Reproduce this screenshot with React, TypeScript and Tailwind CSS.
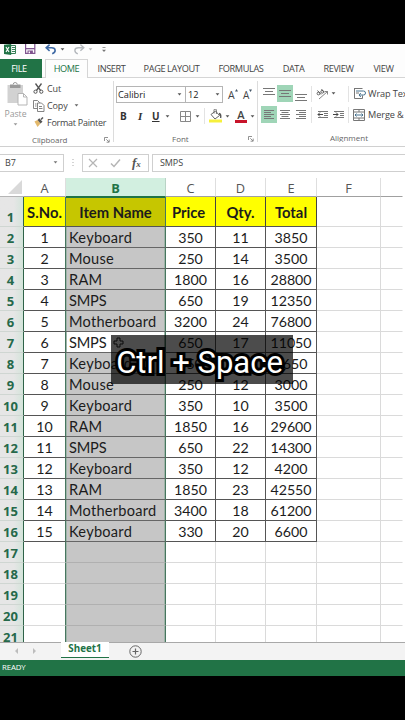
import React from "react";
import clsx from "clsx";

interface Item {
    no: number;
    name: string;
    price: number;
    qty: number;
    total: number;
}

const items: Item[] = [
    { no: 1, name: "Keyboard", price: 350, qty: 11, total: 3850 },
    { no: 2, name: "Mouse", price: 250, qty: 14, total: 3500 },
    { no: 3, name: "RAM", price: 1800, qty: 16, total: 28800 },
    { no: 4, name: "SMPS", price: 650, qty: 19, total: 12350 },
    { no: 5, name: "Motherboard", price: 3200, qty: 24, total: 76800 },
    { no: 6, name: "SMPS", price: 650, qty: 17, total: 11050 },
    { no: 7, name: "Keyboard", price: 350, qty: 13, total: 4650 },
    { no: 8, name: "Mouse", price: 250, qty: 12, total: 3000 },
    { no: 9, name: "Keyboard", price: 350, qty: 10, total: 3500 },
    { no: 10, name: "RAM", price: 1850, qty: 16, total: 29600 },
    { no: 11, name: "SMPS", price: 650, qty: 22, total: 14300 },
    { no: 12, name: "Keyboard", price: 350, qty: 12, total: 4200 },
    { no: 13, name: "RAM", price: 1850, qty: 23, total: 42550 },
    { no: 14, name: "Motherboard", price: 3400, qty: 18, total: 61200 },
    { no: 15, name: "Keyboard", price: 330, qty: 20, total: 6600 },
];

const tabs = [
    { label: "INSERT", className: "w-[47px]" },
    { label: "PAGE LAYOUT", className: "w-[73px]" },
    { label: "FORMULAS", className: "w-[66px]" },
    { label: "DATA", className: "w-[39px]" },
    { label: "REVIEW", className: "w-[51px]" },
    { label: "VIEW", className: "w-[39px]" },
];

const gridCols = "grid grid-cols-[24px_42px_100px_50px_50px_51px_64px_22px] grid-rows-[100%]";

const Caret = ({ className }: { className?: string }) => (
    <svg width="5" height="3" viewBox="0 0 5 3" className={clsx("shrink-0", className)}>
        <path d="M0.6 0.3h3.8L2.5 2.5z" fill="currentColor" />
    </svg>
);

const Launcher = () => (
    <svg width="6" height="6" viewBox="0 0 6 6" fill="none" stroke="#777" strokeWidth="0.8">
        <path d="M0.5 4V0.5H4M2.3 2.3l2.6 2.6M5.2 2.6v2.6H2.6" />
    </svg>
);

// kind decides which side the short lines stick to
const Lines = ({ kind }: { kind: "left" | "center" | "right" }) => {
    const x = kind === "left" ? 0 : kind === "center" ? 1.5 : 3;
    return (
        <svg width="10" height="9" viewBox="0 0 10 9" stroke="#777" strokeWidth="1">
            <path d={`M0 0.5h10M${x} 2.5h7M0 4.5h10M${x} 6.5h7M0 8.5h10`} />
        </svg>
    );
};

const VLines = () => (
    <svg width="12" height="7" viewBox="0 0 12 7" stroke="#777" strokeWidth="1">
        <path d="M0 0.5h12M2 3.5h8M0 6.5h12" />
    </svg>
);

const Indent = ({ flip }: { flip?: boolean }) => (
    <svg width="12" height="9" viewBox="0 0 12 9" fill="none" stroke="#777" strokeWidth="1">
        <path d="M1 1.5h10M7 3.5h4M7 5.5h4M1 7.5h10" />
        <path d={flip ? "M0 4.5h5M3 2.5l2 2l-2 2" : "M1 4.5h5M3 2.5l-2 2l2 2"} stroke="#444" />
    </svg>
);

const QuickAccess = () => (
    <div className="flex h-[15px] items-start bg-[#fdfdfd]">
        <svg width="12" height="11" viewBox="0 0 12 11" className="ml-1">
            <path d="M7 1.5h4.5v8H7" fill="#fff" stroke="#217346" strokeWidth="0.9" />
            <path d="M8 3.5h3M8 5.5h3M8 7.5h3" stroke="#217346" strokeWidth="0.9" />
            <path d="M0 0.8L7.2 0v11L0 10z" fill="#217346" />
            <path d="M2 3l3 5M5 3L2 8" stroke="#fff" strokeWidth="1.1" />
        </svg>
        <svg width="11" height="10" viewBox="0 0 11 10" className="ml-[9px]">
            <path d="M0.6 0v9.3h9.2V0" fill="#fff" stroke="#80548f" strokeWidth="1.2" />
            <path d="M0.6 4h9.2v1.3H0.6z" fill="#80548f" />
            <path d="M2.5 6.5h5.4v3H2.5z" fill="#80548f" />
            <path d="M3.6 7.6h1.4v1.6H3.6z" fill="#fff" />
        </svg>
        <svg width="12" height="11" viewBox="0 0 12 11" fill="none" stroke="#3f6aa5" strokeWidth="1.6" className="ml-[9px]">
            <path d="M4.6 0.6L1.2 3.8l3.4 3M1.4 3.8h5.2c4.6 0 4.6 4.4 0.6 6" />
        </svg>
        <Caret className="ml-[3px] mt-1 text-[#555]" />
        <svg width="12" height="11" viewBox="0 0 12 11" fill="none" stroke="#b4b8bd" strokeWidth="1.4" className="ml-2">
            <path d="M7.4 0.6l3.4 3.2l-3.4 3M10.6 3.8H5.4c-4.6 0-4.6 4.4-0.6 6" />
        </svg>
        <Caret className="ml-[3px] mt-1 text-[#bbb]" />
        <svg width="6" height="6" viewBox="0 0 6 6" className="ml-[8px] mt-[3px]">
            <path d="M1.5 0.5h3" stroke="#999" />
            <path d="M1 2.7h4L3 4.9z" fill="#777" />
        </svg>
    </div>
);

const TabBar = () => (
    <div className="flex h-[19px] bg-[#fdfdfd] text-[9.2px] leading-[19px] tracking-[-0.4px] text-[#444]">
        <div className="flex w-[42px] justify-center bg-[#217346] pr-1 text-white">FILE</div>
        <div className="w-[3px] border-b border-[#d5d5d5]" />
        <div className="flex w-[43px] justify-center border-x border-t border-[#d5d5d5] leading-[18px] text-[#217346]">
            HOME
        </div>
        <div className="flex flex-1 overflow-hidden border-b border-[#d5d5d5]">
            {tabs.map((tab) => (
                <div key={tab.label} className={clsx("flex shrink-0 justify-center whitespace-nowrap", tab.className)}>
                    {tab.label}
                </div>
            ))}
        </div>
    </div>
);

const ClipboardGroup = () => (
    <div className="flex w-[114px] flex-col border-r border-[#dcdcdc]">
        <div className="flex h-[50px]">
            <div className="flex w-[31px] flex-col items-center text-[#999]">
                <svg width="24" height="25" viewBox="0 0 24 25" className="ml-[5px] shrink-0">
                    <path d="M1.5 4h15.5v18H1.5z" fill="#d2d2d2" />
                    <path d="M4 3.5h10.5v3.5H4z" fill="#999" />
                    <path d="M7.2 3.5a2 2 0 0 1 4 0" fill="#fff" stroke="#999" />
                    <path d="M12 12.5h5.5l3.5 3.5v8H12z" fill="#fff" stroke="#b5b5b5" />
                    <path d="M17.5 12.5V16H21" fill="none" stroke="#b5b5b5" />
                </svg>
                <span className="mt-[2px] text-[8.7px] leading-[12px]">Paste</span>
                <Caret className="mt-[3px]" />
            </div>
            <div className="flex flex-col pl-0.5 text-[9px] tracking-[-0.15px] text-[#444]">
                <div className="-mt-px flex h-[18px] items-center">
                    <svg width="11" height="11" viewBox="0 0 11 11" fill="none" stroke="#555" strokeWidth="1">
                        <path d="M2.5 0.5l5 7M8.5 0.5l-5 7" strokeWidth="1.3" />
                        <circle cx="2.5" cy="8.7" r="1.6" />
                        <circle cx="8.3" cy="8.7" r="1.6" />
                    </svg>
                    <span className="ml-[3px]">Cut</span>
                </div>
                <div className="flex h-[18px] items-center">
                    <svg width="12" height="12" viewBox="0 0 12 12" fill="#fff" stroke="#777" strokeWidth="0.9">
                        <path d="M0.5 0.5h4l2 2v6h-6z" />
                        <path d="M4.5 3h4l2.5 2.5v6H4.5z" />
                        <path d="M6 6.5h3M6 8.5h3.5M2 4h1.5M2 6h1.5" />
                    </svg>
                    <span className="ml-0.5">Copy</span>
                    <Caret className="ml-[6px] text-[#666]" />
                </div>
                <div className="flex h-[17px] items-center whitespace-nowrap">
                    <svg width="11" height="11" viewBox="0 0 11 11">
                        <path d="M1.5 4.5l3-1.5l3 3.5l-3 3.5z" fill="#e3b96c" />
                        <path d="M4.5 3l1.8-1.8l3.2 3.6L7.5 6.5z" fill="#555" />
                        <path d="M8 2.5l2-2" stroke="#555" strokeWidth="1.5" />
                    </svg>
                    <span className="ml-[3px] tracking-[-0.25px]">Format Painter</span>
                </div>
            </div>
        </div>
        <div className="mt-[3px] flex h-[13px] items-center justify-between pl-8 pr-[3px] text-[8px] tracking-[-0.1px] text-[#666]">
            <span>Clipboard</span>
            <Launcher />
        </div>
    </div>
);

const FontGroup = () => (
    <div className="flex w-[144px] flex-col border-r border-[#dcdcdc] pl-0.5">
        <div className="mt-[5px] flex h-[17px] items-center text-[9.2px] text-[#222] [&>*]:shrink-0">
            <div className="flex h-[17px] w-[70px] items-center justify-between border border-[#b5b5b5] pl-px pr-[3px]">
                <span>Calibri</span>
                <Caret className="text-[#555]" />
            </div>
            <div className="flex h-[17px] w-[37px] items-center justify-between border border-l-0 border-[#b5b5b5] pl-0.5 pr-[2px]">
                <span>12</span>
                <Caret className="text-[#555]" />
            </div>
            <div className="ml-[5px] flex w-[15px] items-start text-[10.5px] leading-[14px] text-[#444]">
                A
                <svg width="3" height="3" viewBox="0 0 3 3" className="mt-px shrink-0"><path d="M0 2.5L1.5 0L3 2.5z" fill="#456" /></svg>
            </div>
            <div className="flex items-start text-[10px] leading-[14px] text-[#444]">
                A
                <svg width="3" height="3" viewBox="0 0 3 3" className="mt-px shrink-0"><path d="M0 0.5h3L1.5 3z" fill="#456" /></svg>
            </div>
        </div>
        <div className="mt-[5px] flex h-[19px] items-center text-[10px] text-[#333] [&>*]:shrink-0">
            <span className="ml-1 w-[18px] font-bold">B</span>
            <span className="w-[14px] font-['Liberation_Serif',serif] text-[11px] font-bold italic">I</span>
            <span className="w-[13px] font-bold underline">U</span>
            <Caret className="text-[#555]" />
            <svg width="11" height="11" viewBox="0 0 11 11" fill="none" stroke="#888" className="ml-[10px]">
                <path d="M0.5 0.5h10v10H0.5zM5.5 0.5v10M0.5 5.5h10" />
            </svg>
            <Caret className="ml-[4px] text-[#555]" />
            <div className="ml-1 h-4 w-px bg-[#e3e3e3]" />
            <svg width="15" height="14" viewBox="0 0 15 14" className="ml-[3px]">
                <path d="M1 10.5h13v3H1z" fill="#f6f03c" />
                <path d="M3 5.5l4.5-3.5l4 4.5l-4.5 3.5z" fill="#fff" stroke="#666" />
                <path d="M6 4.5V1.2a1.2 1.2 0 0 1 2.4 0V5" fill="none" stroke="#666" strokeWidth="0.9" />
                <path d="M11 4.5c2 0.5 2 2.5 1.6 4.5" fill="none" stroke="#555" strokeWidth="1.4" />
            </svg>
            <Caret className="ml-[2px] text-[#555]" />
            <div className="ml-[5px] flex w-[12px] flex-col items-center">
                <span className="text-[11px] font-semibold leading-[11px] text-[#444]">A</span>
                <div className="h-[3px] w-3 bg-[#c8142a]" />
            </div>
            <Caret className="ml-[3px] text-[#555]" />
        </div>
        <div className="mt-[8px] flex h-[13px] items-center justify-between pl-[56px] pr-[3px] text-[8px] text-[#666]">
            <span>Font</span>
            <Launcher />
        </div>
    </div>
);

const AlignmentGroup = () => (
    <div className="flex w-[147px] flex-col overflow-hidden">
        <div className="mt-[4px] flex h-[19px] items-center text-[9.2px] tracking-[-0.1px] text-[#444] [&>*]:shrink-0">
            <div className="ml-[5px] flex h-4 w-[14px] items-start pt-[2px]">
                <VLines />
            </div>
            <div className="flex h-[17px] w-4 items-center justify-center bg-[#9fd5b7]">
                <VLines />
            </div>
            <div className="ml-[2px] flex h-4 items-end pb-px">
                <VLines />
            </div>
            <div className="ml-1 h-4 w-px bg-[#e3e3e3]" />
            <svg width="13" height="12" viewBox="0 0 13 12" fill="none" stroke="#555" strokeWidth="0.9" className="ml-1">
                <path d="M3 11L11.5 3.5M8.5 3.5h3v3" stroke="#777" />
                <circle cx="2.5" cy="5.5" r="1.4" />
                <path d="M1.5 2.5L5 6.5M5.5 1L8 4.5" />
                <circle cx="6.2" cy="3.8" r="1.4" />
            </svg>
            <Caret className="ml-[2px] text-[#555]" />
            <div className="ml-[12px] h-4 w-px bg-[#e3e3e3]" />
            <svg width="12" height="13" viewBox="0 0 12 13" fill="none" stroke="#777" className="ml-[5px]">
                <path d="M0.5 1v10.5h8V8.5M0.5 1.5h8" />
                <path d="M2 4h7.5a1.8 1.8 0 0 1 0 4H5M6.8 6L5 8l1.8 2" stroke="#47738f" />
                <path d="M2 6h3" />
            </svg>
            <span className="ml-[2px] whitespace-nowrap">Wrap Text</span>
        </div>
        <div className="mt-1 flex h-[19px] items-center text-[9.2px] tracking-[-0.1px] text-[#444] [&>*]:shrink-0">
            <div className="ml-[3px] flex h-[17px] w-4 items-center justify-center bg-[#9fd5b7]">
                <Lines kind="left" />
            </div>
            <div className="ml-[3px] flex w-4">
                <Lines kind="center" />
            </div>
            <Lines kind="right" />
            <div className="ml-[5px] h-4 w-px bg-[#e3e3e3]" />
            <div className="ml-[5px] flex w-4">
                <Indent />
            </div>
            <Indent flip />
            <div className="ml-[3px] h-4 w-px bg-[#e3e3e3]" />
            <svg width="12" height="12" viewBox="0 0 12 12" fill="none" stroke="#777" className="ml-1">
                <path d="M0.5 0.5h11v11H0.5zM0.5 3h11M0.5 9h11M6 0.5V3M6 9v2.5" />
                <path d="M2 6h8M3.5 4.5L2 6l1.5 1.5M8.5 4.5L10 6L8.5 7.5" stroke="#47738f" />
            </svg>
            <span className="ml-[3px] whitespace-nowrap">Merge &amp;</span>
        </div>
        <div className="mt-[9px] flex h-[13px] items-center pl-[72px] text-[8px] text-[#666]">Alignment</div>
    </div>
);

const FormulaBar = () => (
    <div className="flex h-[32px] items-center border-t border-[#d0d0d0] bg-white text-[9px] tracking-[-0.1px] text-[#444]">
        <div className="flex h-[18px] w-[64px] items-center justify-between border border-l-0 border-[#cfcfcf] pl-[5px] pr-[5px]">
            <span>B7</span>
            <Caret className="text-[#777]" />
        </div>
        <svg width="2" height="8" viewBox="0 0 2 8" className="ml-2" fill="#aaa">
            <path d="M0.5 0h1v1h-1zM0.5 3h1v1h-1zM0.5 6h1v1h-1z" />
        </svg>
        <div className="ml-2 flex h-[18px] w-[67px] items-center border border-[#cfcfcf] pl-[5px]">
            <svg width="10" height="10" viewBox="0 0 10 10" stroke="#b5b5b5" strokeWidth="1.2">
                <path d="M1 1l8 8M9 1L1 9" />
            </svg>
            <svg width="11" height="10" viewBox="0 0 11 10" fill="none" stroke="#b5b5b5" strokeWidth="1.5" className="ml-3">
                <path d="M1 5.5l3 3L10 1.5" />
            </svg>
            <span className="ml-[11px] font-['Liberation_Serif',serif] text-[13px] font-bold italic leading-none text-[#555]">
                f<span className="text-[9px]">x</span>
            </span>
        </div>
        <div className="ml-[3px] flex h-[18px] flex-1 items-center border border-r-0 border-[#cfcfcf] pl-[7px]">SMPS</div>
    </div>
);

const ColumnHeaders = () => (
    <div className={clsx(gridCols, "h-[19px] text-[12.8px] leading-[20px] text-[#555]")}>
        <div className="flex items-end justify-end border-b border-[#b5b5b5] pb-0.5 pr-0.5">
            <svg width="14" height="14" viewBox="0 0 14 14"><path d="M14 0v14H0z" fill="#d9d9d9" /></svg>
        </div>
        {["A", "B", "C", "D", "E", "F", ""].map((col, i) => (
            <div
                key={i}
                className={clsx(
                    "border-b border-r text-center",
                    col === "B"
                        ? "border-b-[#217346] border-r-[#b9d3c5] bg-[#d2efe0] font-bold text-[#217346]"
                        : "border-b-[#a0a0a0] border-r-[#dedede]",
                    col === "" && "border-r-transparent"
                )}
            >
                {col}
            </div>
        ))}
    </div>
);

const RowNumber = ({ n, className }: { n: number; className?: string }) => (
    <div
        className={clsx(
            "border-b border-r border-b-[#cfd6d2] border-r-[#2f6349] bg-linear-to-r from-[#e6e6e6] from-60% to-[#d3e4da] pr-0.5 text-center font-['Open_Sans','Noto_Sans',sans-serif] text-[13px] font-bold text-[#25694a]",
            className
        )}
    >
        {n}
    </div>
);

const headCell = "border-b border-r border-b-[#555] border-r-[#444] bg-[#ffff00] text-center";
const dataCell = "border-b border-r border-[#555] text-center text-[14.2px]";
const emptyCell = "border-b border-r border-[#dadada]";
const selectedEdge = "border-r-[#47765f] shadow-[inset_-1px_0_0_#9fb5a9,inset_1px_0_0_#9fb5a9]";

const Sheet = () => (
    <div className="h-[445px] overflow-hidden bg-white font-['Lato',sans-serif] text-[14.6px] leading-[22px] text-[#1c1c1c]">
        <div className={clsx(gridCols, "h-[30px] text-[14.8px] font-bold leading-[31px]")}>
            <RowNumber n={1} className="pt-[7px] leading-[26px]" />
            <div className={clsx(headCell, "border-r-[#47765f]")}>S.No.</div>
            <div className="border-b border-r border-b-[#555] border-r-[#47765f] bg-[#c6c600] text-center shadow-[inset_0_1px_0_#217346]">
                Item Name
            </div>
            <div className={clsx(headCell, "pr-1")}>Price</div>
            <div className={headCell}>Qty.</div>
            <div className={headCell}>Total</div>
            <div className={emptyCell} />
            <div className={clsx(emptyCell, "border-r-transparent")} />
        </div>
        {items.map((item) => (
            <div key={item.no} className={clsx(gridCols, "h-[21px]")}>
                <RowNumber n={item.no + 1} />
                <div className={clsx(dataCell, "border-r-[#47765f]")}>{item.no}</div>
                <div
                    className={clsx(
                        "flex border-b border-r border-b-[#666] pl-[3px]",
                        selectedEdge,
                        item.name === "SMPS" ? "tracking-[-0.2px]" : "tracking-[0.25px]",
                        item.no === 6 ? "bg-white" : "bg-[#c6c6c6]"
                    )}
                >
                    {item.name}
                    {item.no === 6 && (
                        <svg width="11" height="11" viewBox="0 0 11 11" className="ml-[7px] mt-[5px]" fill="#fff" stroke="#222">
                            <path d="M4 1h3v3h3v3H7v3H4V7H1V4h3z" />
                        </svg>
                    )}
                </div>
                <div className={dataCell}>{item.price}</div>
                <div className={dataCell}>{item.qty}</div>
                <div className={dataCell}>{item.total}</div>
                <div className={emptyCell} />
                <div className={clsx(emptyCell, "border-r-transparent")} />
            </div>
        ))}
        {[17, 18, 19, 20, 21].map((n) => (
            <div key={n} className={clsx(gridCols, "h-[21px]")}>
                <RowNumber n={n} />
                <div className={clsx(emptyCell, "border-r-[#47765f]")} />
                <div className={clsx("border-b border-r border-b-[#b0b0b0] bg-[#c6c6c6]", selectedEdge)} />
                <div className={emptyCell} />
                <div className={emptyCell} />
                <div className={emptyCell} />
                <div className={emptyCell} />
                <div className={clsx(emptyCell, "border-r-transparent")} />
            </div>
        ))}
    </div>
);

const SheetTabs = () => (
    <div className="flex h-[18px] border-t border-[#a8a8a8] bg-[#f3f3f3]">
        <svg width="22" height="6" viewBox="0 0 22 6" fill="#bdbdbd" className="ml-[15px] mt-[5px]">
            <path d="M3 0v6L0 3zM18 0v6l3-3z" />
        </svg>
        <div className="-mt-px ml-6 flex h-4 w-[48px] items-center justify-center border-b border-[#217346] bg-white text-[9.8px] font-bold text-[#217346]">
            Sheet1
        </div>
        <svg width="13" height="13" viewBox="0 0 13 13" fill="none" stroke="#666" className="ml-5 mt-[2px]">
            <circle cx="6.5" cy="6.5" r="5.7" />
            <path d="M6.5 3.5v6M3.5 6.5h6" strokeWidth="1.2" />
        </svg>
    </div>
);

export default function App() {
    return (
        <div className="relative flex h-[720px] w-[405px] flex-col overflow-hidden bg-black pt-11 font-['Open_Sans','Noto_Sans',sans-serif]">
            <QuickAccess />
            <TabBar />
            <div className="flex h-[68px] bg-white pb-1 pt-[3px]">
                <ClipboardGroup />
                <FontGroup />
                <AlignmentGroup />
            </div>
            <FormulaBar />
            <div className="bg-white">
                <ColumnHeaders />
                <Sheet />
            </div>
            <SheetTabs />
            <div className="flex h-4 items-center bg-[#217346] pl-0.5 text-[7.8px] tracking-[-0.1px] text-white">READY</div>

            {/* shortcut caption over the sheet */}
            <div className="absolute left-[111px] top-[335px] flex h-[49px] w-[182px] items-center justify-center bg-black/70 pr-[5px] pt-[6px]">
                <span className="whitespace-nowrap font-['Roboto',sans-serif] text-[31px] leading-none text-white [paint-order:stroke_fill] [-webkit-text-stroke:6px_#000]">
                    Ctrl + Space
                </span>
            </div>
        </div>
    );
}
